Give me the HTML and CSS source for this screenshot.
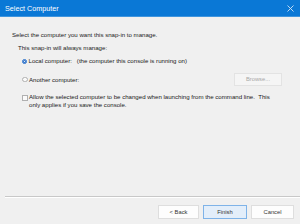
FILE: index.html
```html
<!DOCTYPE html>
<html>
<head>
<meta charset="utf-8">
<link rel="stylesheet" href="styles.css">
</head>
<body>
<div class="dialog">
  <div class="titlebar">
    <span class="title">Select Computer</span>
    <svg class="close" width="7" height="7" viewBox="0 0 7 7"><path d="M0.5 0.5L6.5 6.5M6.5 0.5L0.5 6.5" stroke="#cfe4f7" stroke-width="0.9" fill="none"/></svg>
  </div>
  <div class="content">
    <p class="intro">Select the computer you want this snap-in to manage.</p>
    <p class="sub">This snap-in will always manage:</p>
    <div class="options">
      <div class="opt">
        <span class="radio checked"></span>
        <span class="label">Local computer:</span>
        <span class="note">(the computer this console is running on)</span>
      </div>
      <div class="opt another">
        <span class="radio"></span>
        <span class="label">Another computer:</span>
        <span class="spacer"></span>
        <span class="browse">Browse...</span>
      </div>
      <div class="opt allow">
        <span class="check"></span>
        <span class="label">Allow the selected computer to be changed when launching from the command line.&nbsp; This only applies if you save the console.</span>
      </div>
    </div>
  </div>
  <div class="footer">
    <div class="sep"></div>
    <div class="buttons">
      <span class="btn">&lt; Back</span>
      <span class="btn primary">Finish</span>
      <span class="btn cancel">Cancel</span>
    </div>
  </div>
</div>
</body>
</html>
```
FILE: styles.css
```css
html, body {
  margin: 0;
  padding: 0;
  width: 300px;
  height: 224px;
  overflow: hidden;
  background: #f0f0f0;
  font-family: "Liberation Sans", Arial, sans-serif;
  color: #1a1a1a;
}
.dialog {
  display: flex;
  flex-direction: column;
  height: 224px;
}
.titlebar {
  height: 16px;
  background: #0a78d6;
  border-bottom: 1px solid #3f95de;
  display: flex;
  align-items: center;
  padding: 0 6px 0 5px;
}
.title {
  color: #fff;
  font-size: 7.2px;
  flex: 1;
}
.close {
  display: block;
}
.content {
  flex: 1;
  padding: 14px 0 0 12px;
}
p {
  margin: 0;
  font-size: 6.1px;
  line-height: 8px;
}
.sub {
  margin: 5px 0 0 6px;
}
.options {
  margin: 5px 0 0 10px;
  display: flex;
  flex-direction: column;
}
.opt {
  display: flex;
  align-items: center;
  font-size: 6.1px;
  line-height: 8px;
  width: 260px;
}
.opt.another {
  margin-top: 8px;
}
.opt.allow {
  margin-top: 7px;
  align-items: flex-start;
}
.radio {
  width: 3.5px;
  height: 3.5px;
  border: 0.8px solid #b0b0b0;
  border-radius: 50%;
  background: #fafafa;
  margin-right: 1.5px;
  flex: none;
}
.radio.checked {
  background: #fff;
  border: 1.2px solid #2a6fc9;
  width: 3px;
  height: 3px;
  box-shadow: inset 0 0 0 0.9px #2a6fc9;
}
.check {
  width: 3.5px;
  height: 3.5px;
  border: 0.8px solid #b0b0b0;
  background: #fafafa;
  margin: 2px 1.5px 0 0;
  flex: none;
}
.note {
  margin-left: 5px;
}
.spacer {
  flex: 1;
}
.browse {
  width: 46px;
  height: 11px;
  line-height: 11px;
  text-align: center;
  background: #f5f5f5;
  border: 0.6px solid #e3e3e3;
  color: #a7a7a7;
  font-size: 5.8px;
}
.allow .label {
  width: 250px;
}
.footer {
  padding: 0 0 5px 5px;
}
.sep {
  height: 1px;
  background: #c8c8c8;
  border-bottom: 1px solid #ffffff;
}
.buttons {
  display: flex;
  justify-content: flex-end;
  gap: 4px;
  padding: 7px 6px 0 0;
}
.btn {
  width: 39px;
  height: 12px;
  line-height: 12px;
  text-align: center;
  font-size: 5.8px;
  background: #fdfdfd;
  border: 0.6px solid #dedede;
  color: #333;
}
.btn.primary {
  width: 42px;
  background: #e3eefa;
  border: 0.8px solid #7fb3e8;
}
.btn.cancel {
  width: 41px;
}
```
